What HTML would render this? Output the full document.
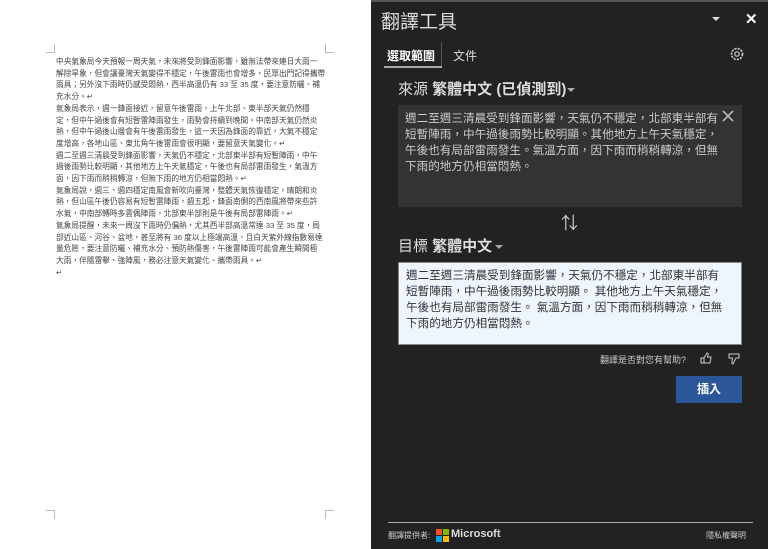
<!DOCTYPE html>
<html><head><meta charset="utf-8"><style>
*{margin:0;padding:0;box-sizing:border-box}
body{width:768px;height:549px;overflow:hidden;background:#fff;font-family:"Liberation Sans","Noto Sans CJK TC",sans-serif;position:relative}
.doc{position:absolute;left:0;top:0;width:371px;height:549px;background:#fff}
.crn{position:absolute;width:9px;height:9px;border-color:#bbb;border-style:solid;border-width:0}
.dt{position:absolute;left:56px;top:56px;font-size:7.7px;line-height:11.7px;color:#444;white-space:nowrap}
.pn{position:absolute;left:371px;top:0;width:397px;height:549px;background:#222;color:#ddd;border-top:2px solid #555}
.a{position:absolute;white-space:nowrap}
.box{position:absolute;left:27px;width:344px;font-size:11.6px;line-height:16px;padding:6px 0 0 7px;white-space:nowrap}
</style></head><body>
<div class="doc">
<div class="crn" style="left:46px;top:44px;border-right-width:1px;border-bottom-width:1px"></div>
<div class="crn" style="left:325px;top:44px;border-left-width:1px;border-bottom-width:1px"></div>
<div class="crn" style="left:46px;top:510px;border-right-width:1px;border-top-width:1px"></div>
<div class="crn" style="left:325px;top:510px;border-left-width:1px;border-top-width:1px"></div>
<div class="dt">中央氣象局今天預報一周天氣，未來將受到鋒面影響，雖無法帶來連日大雨一<br>解除旱象，但會讓臺灣天氣變得不穩定，午後雷雨也會增多，民眾出門記得攜帶<br>雨具；另外沒下雨時仍感受悶熱，西半高溫仍有 33 至 35 度，要注意防曬、補<br>充水分。↵<br>氣象局表示，週一鋒面接近，留意午後雷雨，上午北部、東半部天氣仍然穩<br>定，但中午過後會有短暫雷陣雨發生，雨勢會持續到晚間。中南部天氣仍然炎<br>熱，但中午過後山邊會有午後雷雨發生，這一天因為鋒面的靠近，大氣不穩定<br>度增高，各地山區、東北角午後雷雨會很明顯，要留意天氣變化。↵<br>週二至週三清晨受到鋒面影響，天氣仍不穩定，北部東半部有短暫陣雨，中午<br>過後雨勢比較明顯，其他地方上午天氣穩定，午後也有局部雷雨發生，氣溫方<br>面，因下雨而稍稍轉涼，但無下雨的地方仍相當悶熱。↵<br>氣象局說，週三、週四穩定南風會新吹向臺灣，整體天氣恢復穩定，晴朗和炎<br>熱，但山區午後仍容易有短暫雷陣雨，週五起，鋒面南側的西南風將帶來些許<br>水氣，中南部轉時多雲偶陣雨，北部東半部則是午後有局部雷陣雨。↵<br>氣象局提醒，未來一周沒下雨時仍偏熱，尤其西半部高溫常達 33 至 35 度，局<br>部近山區、河谷、盆地，甚至將有 36 度以上極端高溫，且白天紫外線指數易達<br>量危險，要注意防曬、補充水分、預防熱傷害，午後雷陣雨可能會產生瞬間極<br>大雨，伴隨雷擊、強陣風，務必注意天氣變化、攜帶雨具。↵<br>↵</div>
</div>
<div class="pn">
<div class="a" style="left:10px;top:5px;font-size:19px;color:#ddd">翻譯工具</div>
<div class="a" style="left:341px;top:15px;width:0;height:0;border-left:4px solid transparent;border-right:4px solid transparent;border-top:4px solid #ddd"></div>
<div class="a" style="left:374px;top:8px;font-size:15px;font-weight:bold;color:#fff">✕</div>
<div class="a" style="left:16px;top:45px;font-size:12px;font-weight:bold;color:#fff">選取範圍</div>
<div class="a" style="left:13px;top:64px;width:58px;height:2px;background:#aaa"></div>
<div class="a" style="left:70px;top:40px;width:1px;height:24px;background:#555"></div>
<div class="a" style="left:82px;top:45px;font-size:12px;color:#ddd">文件</div>
<svg class="a" style="left:358px;top:44px" width="16" height="16" viewBox="0 0 16 16"><circle cx="8" cy="8" r="5.5" fill="none" stroke="#ccc" stroke-width="1.6" stroke-dasharray="2.2 1.1"/><circle cx="8" cy="8" r="2.2" fill="none" stroke="#ccc" stroke-width="1.2"/></svg>
<div class="a" style="left:27px;top:76px;font-size:15px;color:#ddd">來源 <b>繁體中文 (已偵測到)</b></div>
<div class="a" style="left:196px;top:86px;border-left:4px solid transparent;border-right:4px solid transparent;border-top:4px solid #aaa"></div>
<div class="box" style="top:103px;height:102px;background:#333;color:#ccc">週二至週三清晨受到鋒面影響，天氣仍不穩定，北部東半部有<br>短暫陣雨，中午過後雨勢比較明顯。其他地方上午天氣穩定，<br>午後也有局部雷雨發生。氣溫方面，因下雨而稍稍轉涼，但無<br>下雨的地方仍相當悶熱。</div>
<svg class="a" style="left:351px;top:108px" width="12" height="12" viewBox="0 0 12 12"><path d="M1 1L11 11M11 1L1 11" stroke="#ccc" stroke-width="1.4"/></svg>
<div class="a" style="left:190px;top:207px;font-size:17px;color:#ccc">⇅</div>
<div class="a" style="left:27px;top:233px;font-size:15px;color:#ddd">目標 <b>繁體中文</b></div>
<div class="a" style="left:124px;top:243px;border-left:4px solid transparent;border-right:4px solid transparent;border-top:4px solid #aaa"></div>
<div class="box" style="top:260px;height:83px;background:#eef5fd;border:1px solid #888;color:#333;padding-top:5px">週二至週三清晨受到鋒面影響，天氣仍不穩定，北部東半部有<br>短暫陣雨，中午過後雨勢比較明顯。 其他地方上午天氣穩定，<br>午後也有局部雷雨發生。 氣溫方面，因下雨而稍稍轉涼，但無<br>下雨的地方仍相當悶熱。</div>
<div class="a" style="left:229px;top:351px;font-size:9px;color:#ccc">翻譯是否對您有幫助?</div>
<svg class="a" style="left:329px;top:350px" width="12" height="12" viewBox="0 0 12 12"><path d="M1 6h3v5H1zM4 6l3-5c1 0 1.5 1 1 2.5L7.5 5H11l-1 6H4" fill="none" stroke="#ccc" stroke-width="1"/></svg>
<svg class="a" style="left:357px;top:351px" width="12" height="12" viewBox="0 0 12 12"><path d="M1 1h10v4H8l-3 6c-1 0-1.2-1-1-2.5L4.5 5H1z" fill="none" stroke="#ccc" stroke-width="1"/></svg>
<div class="a" style="left:305px;top:374px;width:66px;height:27px;background:#2b579a;color:#fff;font-size:12px;font-weight:bold;text-align:center;line-height:27px">插入</div>
<div class="a" style="left:17px;top:520px;width:365px;height:1px;background:#aaa"></div>
<div class="a" style="left:17px;top:528px;font-size:8px;color:#ccc">翻譯提供者:</div>
<div class="a" style="left:65px;top:527px;width:6px;height:6px;background:#f25022"></div>
<div class="a" style="left:72px;top:527px;width:6px;height:6px;background:#7fba00"></div>
<div class="a" style="left:65px;top:534px;width:6px;height:6px;background:#00a4ef"></div>
<div class="a" style="left:72px;top:534px;width:6px;height:6px;background:#ffb900"></div>
<div class="a" style="left:80px;top:526px;font-size:11px;font-weight:bold;color:#ddd">Microsoft</div>
<div class="a" style="left:335px;top:528px;font-size:8px;color:#ccc">隱私權聲明</div>
</div>
</body></html>
